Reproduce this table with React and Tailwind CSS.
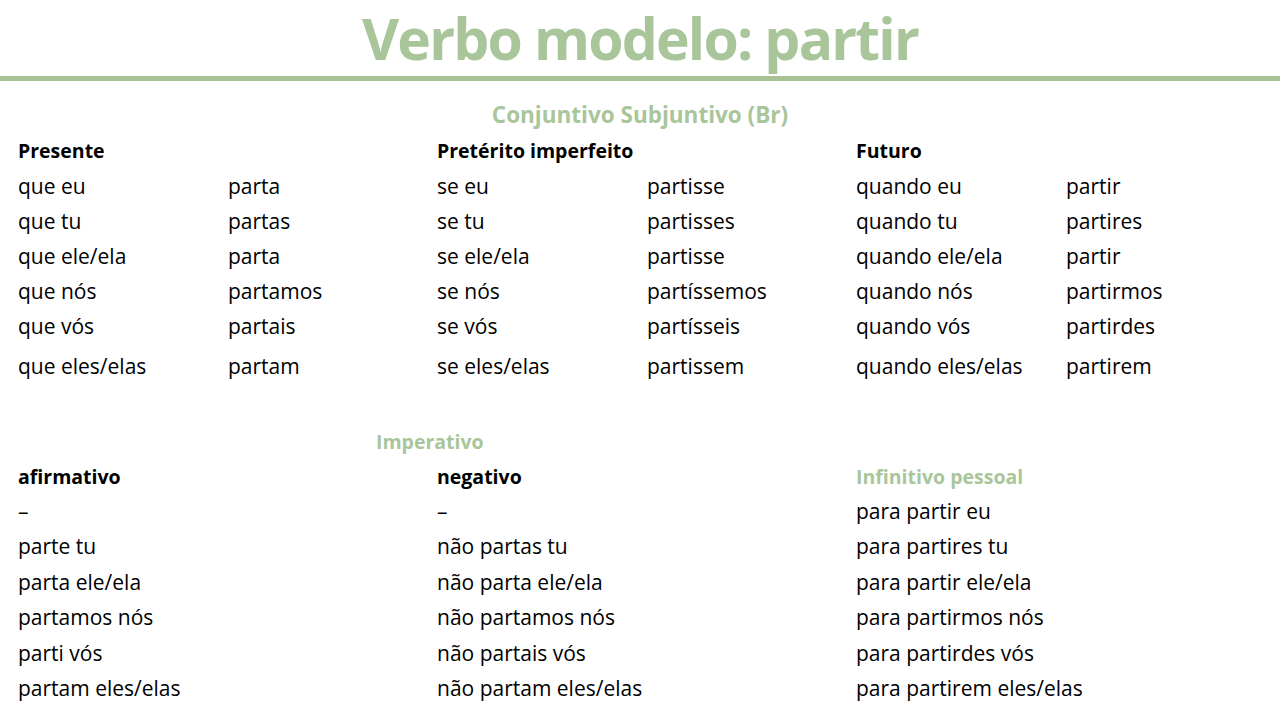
import React from "react";

const presente = [
	["que eu", "parta"],
	["que tu", "partas"],
	["que ele/ela", "parta"],
	["que nós", "partamos"],
	["que vós", "partais"],
	["que eles/elas", "partam"],
];

const imperfeito = [
	["se eu", "partisse"],
	["se tu", "partisses"],
	["se ele/ela", "partisse"],
	["se nós", "partíssemos"],
	["se vós", "partísseis"],
	["se eles/elas", "partissem"],
];

const futuro = [
	["quando eu", "partir"],
	["quando tu", "partires"],
	["quando ele/ela", "partir"],
	["quando nós", "partirmos"],
	["quando vós", "partirdes"],
	["quando eles/elas", "partirem"],
];

const afirmativo = ["–", "parte tu", "parta ele/ela", "partamos nós", "parti vós", "partam eles/elas"];
const negativo = ["–", "não partas tu", "não parta ele/ela", "não partamos nós", "não partais vós", "não partam eles/elas"];
const infinitivo = [
	"para partir eu",
	"para partires tu",
	"para partir ele/ela",
	"para partirmos nós",
	"para partirdes vós",
	"para partirem eles/elas",
];

function Row({ children, className = "" }) {
	return <div className={`grid grid-cols-[210px_209px_210px_209px_210px_1fr] h-[35px] items-center ${className}`}>{children}</div>;
}

export default function App() {
	return (
		<div className="w-[1280px] h-[720px] bg-white overflow-hidden text-[21px] text-black font-['Open_Sans','Lato',sans-serif]">
			{/* title */}
			<div className="h-[76px] flex justify-center">
				<h1 className="mt-[10px] text-[57px] font-bold text-[#a9c59a] tracking-[-1.8px] leading-none">
					Verbo modelo: partir
				</h1>
			</div>
			<div className="h-[5px] bg-[#a7c396]" />

			<div className="pl-[18px]">
				{/* subjuntivo */}
				<div className="mt-[16px] h-[35px] flex items-center justify-center pr-[18px]">
					<span className="text-[22.5px] font-bold text-[#a9c59a]">Conjuntivo Subjuntivo (Br)</span>
				</div>
				<Row className="mt-[1px] font-bold text-[19.5px]">
					<span>Presente</span>
					<span />
					<span>Pretérito imperfeito</span>
					<span />
					<span>Futuro</span>
					<span />
				</Row>
				{presente.map((p, i) => (
					<Row key={i} className={i === 0 ? "mt-[1px]" : i === 5 ? "mt-[5px]" : ""}>
						<span>{p[0]}</span>
						<span>{p[1]}</span>
						<span>{imperfeito[i][0]}</span>
						<span>{imperfeito[i][1]}</span>
						<span>{futuro[i][0]}</span>
						<span>{futuro[i][1]}</span>
					</Row>
				))}

				{/* imperativo */}
				<div className="mt-[40px] h-[35px] flex items-center pl-[358px]">
					<span className="font-bold text-[19.5px] text-[#a9c59a]">Imperativo</span>
				</div>
				<div className="grid grid-cols-[419px_419px_1fr]">
					<div>
						<div className="h-[35px] flex items-center font-bold text-[19.5px]">afirmativo</div>
						{afirmativo.map((t) => (
							<div key={t} className="h-[35.4px] flex items-center">{t}</div>
						))}
					</div>
					<div>
						<div className="h-[35px] flex items-center font-bold text-[19.5px]">negativo</div>
						{negativo.map((t) => (
							<div key={t} className="h-[35.4px] flex items-center">{t}</div>
						))}
					</div>
					<div>
						<div className="h-[35px] flex items-center font-bold text-[19.5px] text-[#a9c59a]">Infinitivo pessoal</div>
						{infinitivo.map((t) => (
							<div key={t} className="h-[35.4px] flex items-center">{t}</div>
						))}
					</div>
				</div>
			</div>
		</div>
	);
}
